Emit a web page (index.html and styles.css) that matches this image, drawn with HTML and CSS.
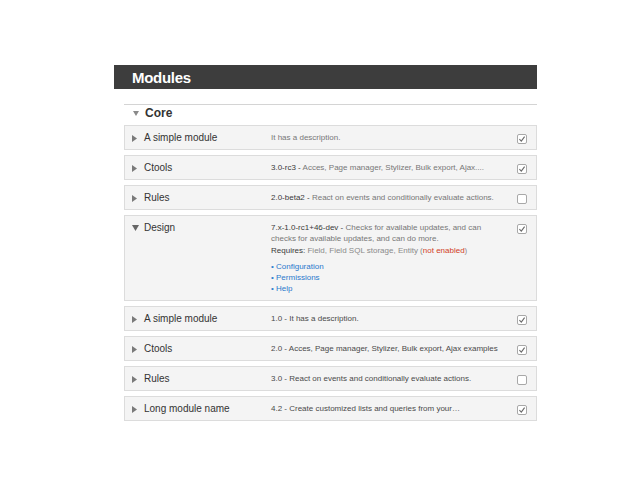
FILE: index.html
```html
<!DOCTYPE html>
<html>
<head>
<meta charset="utf-8">
<link rel="stylesheet" href="styles.css">
</head>
<body>
<div class="page">
  <div class="title">Modules</div>
  <div class="group">
    <div class="group-head">
      <svg class="caret-core" width="6" height="5" viewBox="0 0 6 5"><polygon points="0,0 6,0 3,5" fill="#8a8a8a"/></svg>
      <span>Core</span>
    </div>

    <div class="row">
      <div class="caret"><svg width="5" height="7" viewBox="0 0 5 7"><polygon points="0,0 5,3.5 0,7" fill="#7a7a7a"/></svg></div>
      <div class="name">A simple module</div>
      <div class="desc">It has a description.</div>
      <svg class="check" width="10" height="10" viewBox="0 0 10 10"><rect x=".5" y=".5" width="9" height="9" rx="1.5" fill="#fff" stroke="#a8a8a8"/><path d="M2.4 5.2l1.9 1.9 3.3-4.4" stroke="#6a6a6a" stroke-width="1.1" fill="none"/></svg>
    </div>

    <div class="row">
      <div class="caret"><svg width="5" height="7" viewBox="0 0 5 7"><polygon points="0,0 5,3.5 0,7" fill="#7a7a7a"/></svg></div>
      <div class="name">Ctools</div>
      <div class="desc"><span class="ver">3.0-rc3 -</span> Acces, Page manager, Stylizer, Bulk export, Ajax....</div>
      <svg class="check" width="10" height="10" viewBox="0 0 10 10"><rect x=".5" y=".5" width="9" height="9" rx="1.5" fill="#fff" stroke="#a8a8a8"/><path d="M2.4 5.2l1.9 1.9 3.3-4.4" stroke="#6a6a6a" stroke-width="1.1" fill="none"/></svg>
    </div>

    <div class="row">
      <div class="caret"><svg width="5" height="7" viewBox="0 0 5 7"><polygon points="0,0 5,3.5 0,7" fill="#7a7a7a"/></svg></div>
      <div class="name">Rules</div>
      <div class="desc"><span class="ver">2.0-beta2 -</span> React on events and conditionally evaluate actions.</div>
      <svg class="check" width="10" height="10" viewBox="0 0 10 10"><rect x=".5" y=".5" width="9" height="9" rx="1.5" fill="#fff" stroke="#a8a8a8"/></svg>
    </div>

    <div class="row row-open">
      <div class="caret"><svg width="7" height="6" viewBox="0 0 7 6"><polygon points="0,0 7,0 3.5,6" fill="#666"/></svg></div>
      <div class="name">Design</div>
      <div class="desc desc-open">
        <div><span class="ver">7.x-1.0-rc1+46-dev -</span> Checks for available updates, and can checks for available updates, and can do more.</div>
        <div class="requires"><span class="ver">Requires:</span> Field, Field SQL storage, Entity (<span class="warn">not enabled</span>)</div>
        <ul class="links">
          <li>• <a href="#">Configuration</a></li>
          <li>• <a href="#">Permissions</a></li>
          <li>• <a href="#">Help</a></li>
        </ul>
      </div>
      <svg class="check" width="10" height="10" viewBox="0 0 10 10"><rect x=".5" y=".5" width="9" height="9" rx="1.5" fill="#fff" stroke="#a8a8a8"/><path d="M2.4 5.2l1.9 1.9 3.3-4.4" stroke="#6a6a6a" stroke-width="1.1" fill="none"/></svg>
    </div>

    <div class="row">
      <div class="caret"><svg width="5" height="7" viewBox="0 0 5 7"><polygon points="0,0 5,3.5 0,7" fill="#7a7a7a"/></svg></div>
      <div class="name">A simple module</div>
      <div class="desc dark">1.0 - It has a description.</div>
      <svg class="check" width="10" height="10" viewBox="0 0 10 10"><rect x=".5" y=".5" width="9" height="9" rx="1.5" fill="#fff" stroke="#a8a8a8"/><path d="M2.4 5.2l1.9 1.9 3.3-4.4" stroke="#6a6a6a" stroke-width="1.1" fill="none"/></svg>
    </div>

    <div class="row">
      <div class="caret"><svg width="5" height="7" viewBox="0 0 5 7"><polygon points="0,0 5,3.5 0,7" fill="#7a7a7a"/></svg></div>
      <div class="name">Ctools</div>
      <div class="desc dark">2.0 - Acces, Page manager, Stylizer, Bulk export, Ajax examples</div>
      <svg class="check" width="10" height="10" viewBox="0 0 10 10"><rect x=".5" y=".5" width="9" height="9" rx="1.5" fill="#fff" stroke="#a8a8a8"/><path d="M2.4 5.2l1.9 1.9 3.3-4.4" stroke="#6a6a6a" stroke-width="1.1" fill="none"/></svg>
    </div>

    <div class="row">
      <div class="caret"><svg width="5" height="7" viewBox="0 0 5 7"><polygon points="0,0 5,3.5 0,7" fill="#7a7a7a"/></svg></div>
      <div class="name">Rules</div>
      <div class="desc dark">3.0 - React on events and conditionally evaluate actions.</div>
      <svg class="check" width="10" height="10" viewBox="0 0 10 10"><rect x=".5" y=".5" width="9" height="9" rx="1.5" fill="#fff" stroke="#a8a8a8"/></svg>
    </div>

    <div class="row">
      <div class="caret"><svg width="5" height="7" viewBox="0 0 5 7"><polygon points="0,0 5,3.5 0,7" fill="#7a7a7a"/></svg></div>
      <div class="name">Long module name</div>
      <div class="desc dark">4.2 - Create customized lists and queries from your…</div>
      <svg class="check" width="10" height="10" viewBox="0 0 10 10"><rect x=".5" y=".5" width="9" height="9" rx="1.5" fill="#fff" stroke="#a8a8a8"/><path d="M2.4 5.2l1.9 1.9 3.3-4.4" stroke="#6a6a6a" stroke-width="1.1" fill="none"/></svg>
    </div>
  </div>
</div>
</body>
</html>
```

FILE: styles.css
```css
body {
  margin: 0;
  background: #fff;
  font-family: "Liberation Sans", Arial, Helvetica, sans-serif;
}

.page {
  width: 423px;
  margin: 65px 0 0 114px;
}

.title {
  height: 24px;
  background: #3d3d3d;
  color: #fff;
  font-size: 15px;
  font-weight: bold;
  letter-spacing: -0.3px;
  line-height: 25px;
  padding-left: 18px;
}

.group {
  margin: 15px 0 0 10px;
}

.group-head {
  border-top: 1px solid #d4d4d4;
  height: 20px;
  display: flex;
  align-items: flex-start;
  padding-left: 9px;
  font-size: 12px;
  font-weight: bold;
  color: #333;
  line-height: 17px;
}

.caret-core {
  margin: 6px 6px 0 0;
}

.row {
  display: flex;
  align-items: flex-start;
  background: #f4f4f4;
  border: 1px solid #dcdcdc;
  padding: 6px 9px 5px 7px;
  margin-bottom: 5px;
}

.caret {
  width: 12px;
  height: 12px;
  display: flex;
  align-items: center;
}

.row-open .caret {
  height: 11px;
}

.name {
  width: 127px;
  font-size: 10px;
  line-height: 12px;
  color: #333;
}

.desc {
  width: 232px;
  font-size: 8px;
  line-height: 12px;
  color: #777;
}

.desc.dark {
  color: #4a4a4a;
}

.ver {
  color: #3a3a3a;
}

.desc-open {
  line-height: 11px;
  padding-bottom: 1px;
}

.requires {
  margin-top: 1px;
  color: #8a8a8a;
}

.warn {
  color: #d2401e;
}

.links {
  list-style: none;
  margin: 5px 0 0 0;
  padding: 0;
  color: #2d7fd0;
}

.links a {
  color: #2a78cc;
  text-decoration: none;
}

.check {
  margin-left: auto;
  margin-top: 2px;
  flex: none;
}
```
